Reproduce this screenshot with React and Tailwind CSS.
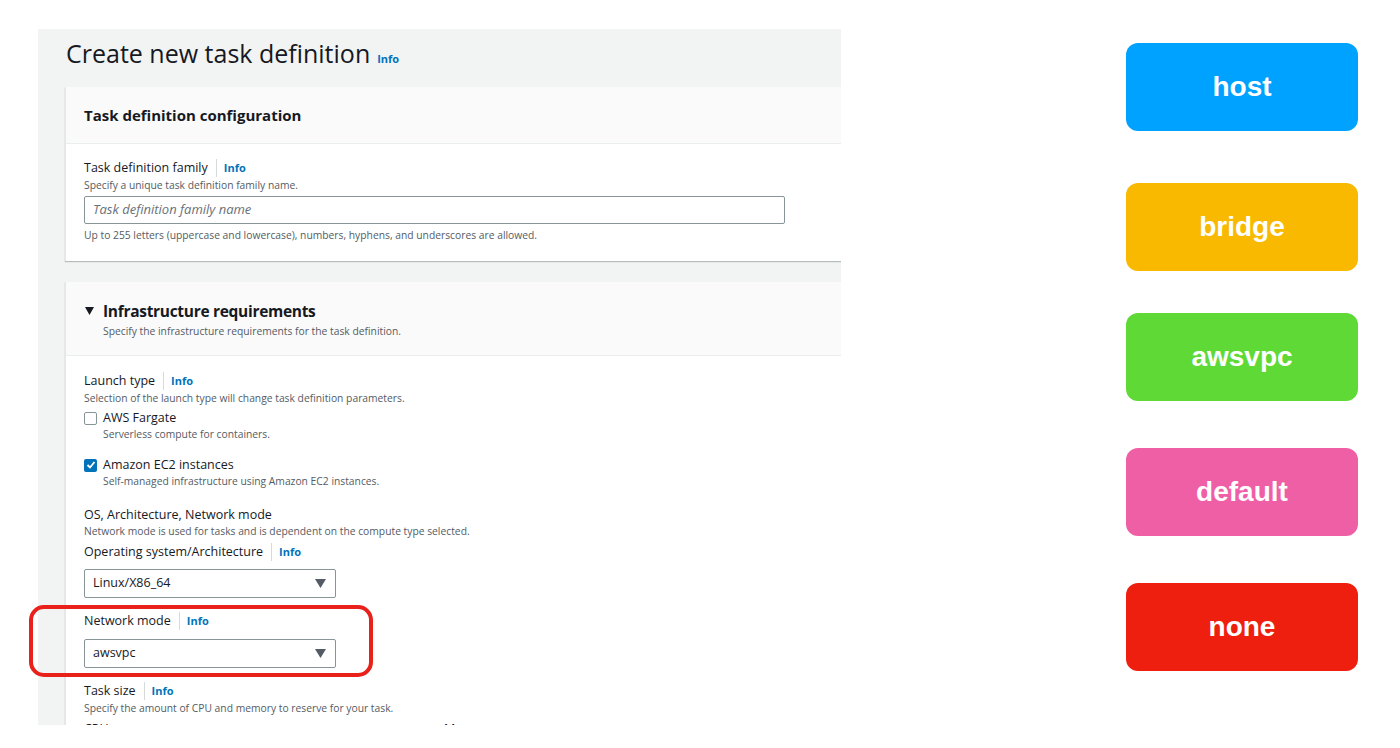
import React from "react";

const AWS_FONT = { fontFamily: '"Open Sans", "Noto Sans", Arial, sans-serif' };

function Info() {
  return (
    <span className="ml-[8px] border-l border-[#d5dbdb] pl-[7px] text-[11px] font-bold text-[#0073bb] leading-[18px]">
      Info
    </span>
  );
}

function Label({ children, info = true, className = "" }) {
  return (
    <div className={`flex items-center text-[12.5px] leading-[18px] text-[#16191f] ${className}`}>
      <span>{children}</span>
      {info && <Info />}
    </div>
  );
}

function Desc({ children, className = "" }) {
  return <div className={`text-[10.3px] leading-[14px] text-[#545b64] ${className}`}>{children}</div>;
}

function Select({ value, className = "" }) {
  return (
    <div
      className={`flex h-[29px] w-[252px] items-center justify-between rounded-[2px] border border-[#879596] bg-white pl-[8px] pr-[9px] text-[12.5px] text-[#16191f] ${className}`}
    >
      <span>{value}</span>
      <svg width="11" height="9" viewBox="0 0 11 9">
        <polygon points="0,0 11,0 5.5,9" fill="#545b64" />
      </svg>
    </div>
  );
}

function Checkbox({ checked, label, desc, className = "" }) {
  return (
    <div className={className}>
      <div className="flex items-center">
        {checked ? (
          <div className="flex h-[13px] w-[13px] items-center justify-center rounded-[2px] bg-[#0073bb]">
            <svg width="10" height="10" viewBox="0 0 10 10">
              <polyline points="1.5,5 4,7.5 8.5,2" fill="none" stroke="white" strokeWidth="1.8" />
            </svg>
          </div>
        ) : (
          <div className="h-[13px] w-[13px] rounded-[2px] border border-[#879596] bg-white" />
        )}
        <span className="ml-[6px] text-[12.5px] leading-[18px] text-[#16191f]">{label}</span>
      </div>
      <Desc className="ml-[19px]">{desc}</Desc>
    </div>
  );
}

function Pill({ children, color, className = "" }) {
  return (
    <div
      className={`flex h-[88px] w-[232px] items-center justify-center rounded-[12px] text-[28px] font-bold text-white ${color} ${className}`}
      style={{ fontFamily: '"Liberation Sans", Arial, sans-serif' }}
    >
      {children}
    </div>
  );
}

export default function App() {
  return (
    <div className="relative flex h-[748px] w-[1400px] overflow-hidden bg-white">
      <div
        className="ml-[38px] mt-[29px] h-[696px] w-[803px] shrink-0 overflow-hidden bg-[#f2f3f3]"
        style={AWS_FONT}
      >
        <div className="ml-[28px] mt-[9px] flex items-baseline">
          <h1 className="text-[25px] leading-[30px] text-[#16191f]">Create new task definition</h1>
          <span className="ml-[7px] text-[11px] font-bold text-[#0073bb]">Info</span>
        </div>

        <div className="ml-[27px] mt-[19px] w-[800px] border-l border-[#e4e7e7] bg-white shadow-[0_1px_1px_rgba(0,28,36,0.25)]">
          <div className="flex h-[57px] items-center border-b border-[#eaeded] bg-[#fafafa] pl-[18px]">
            <h2 className="text-[15px] font-bold text-[#16191f]">Task definition configuration</h2>
          </div>
          <div className="pb-[19px] pl-[18px] pt-[15px]">
            <Label>Task definition family</Label>
            <Desc className="mt-[1px]">Specify a unique task definition family name.</Desc>
            <div className="mt-[4px] flex h-[28px] w-[701px] items-center rounded-[2px] border border-[#879596] pl-[8px] text-[13px] italic text-[#687078]">
              Task definition family name
            </div>
            <Desc className="mt-[4px]">
              Up to 255 letters (uppercase and lowercase), numbers, hyphens, and underscores are allowed.
            </Desc>
          </div>
        </div>

        <div className="ml-[27px] mt-[21px] w-[800px] border-l border-[#e4e7e7] bg-white shadow-[0_1px_1px_rgba(0,28,36,0.25)]">
          <div className="h-[74px] border-b border-[#eaeded] bg-[#fafafa] pl-[19px] pt-[18px]">
            <div className="flex items-center">
              <svg width="9" height="8" viewBox="0 0 9 8">
                <polygon points="0,0 9,0 4.5,8" fill="#16191f" />
              </svg>
              <h2 className="ml-[9px] text-[15.5px] font-bold leading-[22px] tracking-[-0.3px] text-[#16191f]">
                Infrastructure requirements
              </h2>
            </div>
            <Desc className="ml-[18px] mt-[2px]">Specify the infrastructure requirements for the task definition.</Desc>
          </div>
          <div className="pl-[18px] pt-[16px]">
            <Label>Launch type</Label>
            <Desc className="mt-[1px]">Selection of the launch type will change task definition parameters.</Desc>
            <Checkbox className="mt-[4px]" label="AWS Fargate" desc="Serverless compute for containers." />
            <Checkbox
              className="mt-[15px]"
              checked
              label="Amazon EC2 instances"
              desc="Self-managed infrastructure using Amazon EC2 instances."
            />
            <Label info={false} className="mt-[18px]">OS, Architecture, Network mode</Label>
            <Desc>Network mode is used for tasks and is dependent on the compute type selected.</Desc>
            <Label className="mt-[5px]">Operating system/Architecture</Label>
            <Select className="mt-[8px]" value="Linux/X86_64" />
            <Label className="mt-[14px]">Network mode</Label>
            <Select className="mt-[9px]" value="awsvpc" />
            <Label className="mt-[14px]">Task size</Label>
            <Desc className="mt-[1px]">Specify the amount of CPU and memory to reserve for your task.</Desc>
            <div className="mt-[5px] flex text-[12.5px] leading-[18px] text-[#16191f]">
              <span className="w-[360px]">CPU</span>
              <span>Memory</span>
            </div>
          </div>
        </div>
      </div>

      <div className="ml-[285px] flex flex-col pt-[43px]">
        <Pill color="bg-[#00a2ff]">host</Pill>
        <Pill color="bg-[#f8b900]" className="mt-[52px]">bridge</Pill>
        <Pill color="bg-[#5ed936]" className="mt-[42px]">awsvpc</Pill>
        <Pill color="bg-[#ee5fa5]" className="mt-[47px]">default</Pill>
        <Pill color="bg-[#ee1f0f]" className="mt-[47px]">none</Pill>
      </div>

      <div className="pointer-events-none absolute left-[29px] top-[605px] h-[72px] w-[344px] rounded-[15px] border-[4px] border-[#e8211b]" />
    </div>
  );
}
